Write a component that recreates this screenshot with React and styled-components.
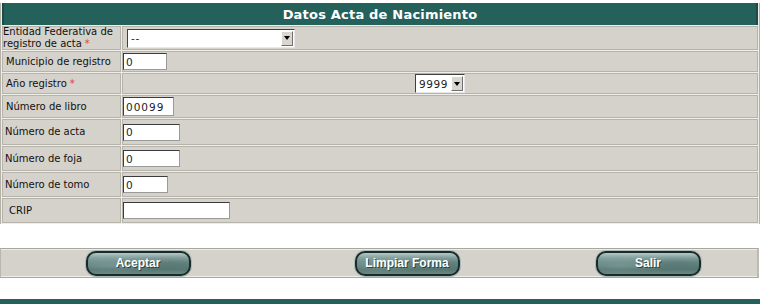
import React from "react";
import styled, { createGlobalStyle } from "styled-components";

const GlobalStyle = createGlobalStyle`
	html, body {
		margin: 0;
		padding: 0;
		background: #ffffff;
	}
	body {
		font-family: "DejaVu Sans", Verdana, sans-serif;
	}
`;

const Page = styled.div`
	width: 763px;
	height: 304px;
	padding-top: 3px;
	box-sizing: border-box;
	overflow: hidden;
	display: flex;
	flex-direction: column;
`;

const FormTable = styled.div`
	width: 760px;
	box-sizing: border-box;
	display: grid;
	grid-template-columns: 119px 1fr;
	gap: 1px;
	padding: 0 1px 1px 1px;
	background: #eeede8;
	border-left: 1px solid #b4b1a9;
	border-right: 1px solid #b4b1a9;
`;

const Header = styled.div`
	grid-column: 1 / -1;
	height: 22px;
	background: #25615b;
	border-left: 2px solid #1d4b46;
	border-right: 2px solid #1d4b46;
	display: flex;
	align-items: center;
	justify-content: center;
	color: #ffffff;
	font-weight: bold;
	font-size: 13px;
	letter-spacing: 0.2px;
`;

const LabelCell = styled.div`
	height: ${({ h }) => h}px;
	box-sizing: border-box;
	background: #d4d2ca;
	border: 1px solid #b6b3ab;
	display: flex;
	align-items: center;
	padding-left: ${({ pad }) => pad ?? 2}px;
	font-size: 10px;
	line-height: 12px;
	color: #111111;
	white-space: nowrap;
`;

const ValueCell = styled.div`
	height: ${({ h }) => h}px;
	box-sizing: border-box;
	background: #d4d2ca;
	border: 1px solid #b6b3ab;
	display: flex;
	align-items: center;
	justify-content: ${({ center }) => (center ? "center" : "flex-start")};
	padding-left: ${({ pad }) => pad ?? 0}px;
`;

const Required = styled.span`
	color: #e0403a;
	margin-left: 3px;
`;

const TextInput = styled.div`
	width: ${({ w }) => w}px;
	height: ${({ hh }) => hh ?? 17}px;
	box-sizing: border-box;
	background: #ffffff;
	border-top: 1px solid #3c3c3c;
	border-left: 1px solid #3c3c3c;
	border-right: 1px solid #9a9a9a;
	border-bottom: 1px solid #9a9a9a;
	font-size: 10.5px;
	color: #222222;
	padding-left: 2px;
	display: flex;
	align-items: center;
	letter-spacing: ${({ spaced }) => (spaced ? "1px" : "0")};
`;

const SelectBox = styled.div`
	width: ${({ w }) => w}px;
	height: 19px;
	box-sizing: border-box;
	background: #ffffff;
	border-top: 1px solid #404040;
	border-left: 1px solid #404040;
	border-right: 1px solid #e8e8e8;
	border-bottom: 1px solid #e8e8e8;
	display: flex;
	align-items: center;
	justify-content: space-between;
	font-size: 10.5px;
	color: #222222;
	padding-left: 3px;
	letter-spacing: 0.6px;
`;

const ArrowButton = styled.div`
	width: 12px;
	height: 15px;
	margin-right: 1px;
	box-sizing: border-box;
	background: #d8d6cf;
	border-top: 1px solid #ffffff;
	border-left: 1px solid #ffffff;
	border-right: 1px solid #707070;
	border-bottom: 1px solid #707070;
	display: flex;
	align-items: center;
	justify-content: center;

	&::after {
		content: "";
		border-left: 3px solid transparent;
		border-right: 3px solid transparent;
		border-top: 4px solid #000000;
	}
`;

const Gap = styled.div`
	height: ${({ h }) => h}px;
	flex-shrink: 0;
`;

const ButtonBar = styled.div`
	width: 759px;
	height: 30px;
	flex-shrink: 0;
	box-sizing: border-box;
	background: #d4d2ca;
	border-top: 1px solid #a9a69f;
	border-bottom: 1px solid #a9a69f;
	border-left: 1px solid #b9b6ae;
	border-right: 2px solid #bdbab2;
	box-shadow: inset 0 1px 0 #eeede8, inset 0 -1px 0 #eeede8;
	display: grid;
	grid-template-columns: 274px 264px 1fr;
	align-items: center;
	justify-items: center;
`;

const PillButton = styled.button`
	width: 105px;
	height: 25px;
	box-sizing: border-box;
	border: 2px solid #1a2a28;
	border-radius: 10px;
	background:
		radial-gradient(ellipse at 22% 62%, rgba(255, 255, 255, 0.14), transparent 40%),
		radial-gradient(ellipse at 78% 45%, rgba(30, 40, 40, 0.14), transparent 45%),
		linear-gradient(
			to bottom,
			#b4c9c6 0%,
			#8aa6a3 20%,
			#668986 48%,
			#557672 78%,
			#6a8885 100%
		);
	color: #ffffff;
	font-family: "Liberation Sans", Arial, sans-serif;
	font-weight: bold;
	font-size: 12px;
	text-shadow: 1px 1px 0 #2d4543;
	padding: 0;
	cursor: pointer;
	box-shadow: 0 0 0 1px #a9bab8;
`;

const FooterBar = styled.div`
	width: 760px;
	height: 8px;
	flex-shrink: 0;
	background: #25615b;
`;

const rows = [
	{
		h: 24,
		pad: 0,
		label: (
			<>
				Entidad Federativa de
				<br />
				registro de acta<Required>*</Required>
			</>
		),
		value: (
			<SelectBox w={168}>
				--
				<ArrowButton />
			</SelectBox>
		),
		vpad: 4,
	},
	{ h: 21, pad: 3, label: "Municipio de registro", value: <TextInput w={44}>0</TextInput> },
	{
		h: 21,
		pad: 3,
		label: (
			<>
				Año registro<Required>*</Required>
			</>
		),
		value: (
			<SelectBox w={50}>
				9999
				<ArrowButton />
			</SelectBox>
		),
		center: true,
	},
	{
		h: 23,
		pad: 3,
		label: "Número de libro",
		value: (
			<TextInput w={51} hh={19} spaced>
				00099
			</TextInput>
		),
	},
	{ h: 26, pad: 2, label: "Número de acta", value: <TextInput w={57}>0</TextInput> },
	{ h: 25, pad: 2, label: "Número de foja", value: <TextInput w={57}>0</TextInput> },
	{ h: 25, pad: 2, label: "Número de tomo", value: <TextInput w={45}>0</TextInput> },
	{ h: 25, pad: 6, label: "CRIP", value: <TextInput w={107} /> },
];

export default function App() {
	return (
		<>
			<GlobalStyle />
			<Page>
				<FormTable>
					<Header>Datos Acta de Nacimiento</Header>
					{rows.map((row, i) => (
						<React.Fragment key={i}>
							<LabelCell h={row.h} pad={row.pad}>
								<span>{row.label}</span>
							</LabelCell>
							<ValueCell h={row.h} pad={row.vpad} center={row.center}>
								{row.value}
							</ValueCell>
						</React.Fragment>
					))}
				</FormTable>
				<Gap h={24} />
				<ButtonBar>
					<PillButton>Aceptar</PillButton>
					<PillButton>Limpiar Forma</PillButton>
					<PillButton>Salir</PillButton>
				</ButtonBar>
				<Gap h={21} />
				<FooterBar />
			</Page>
		</>
	);
}
